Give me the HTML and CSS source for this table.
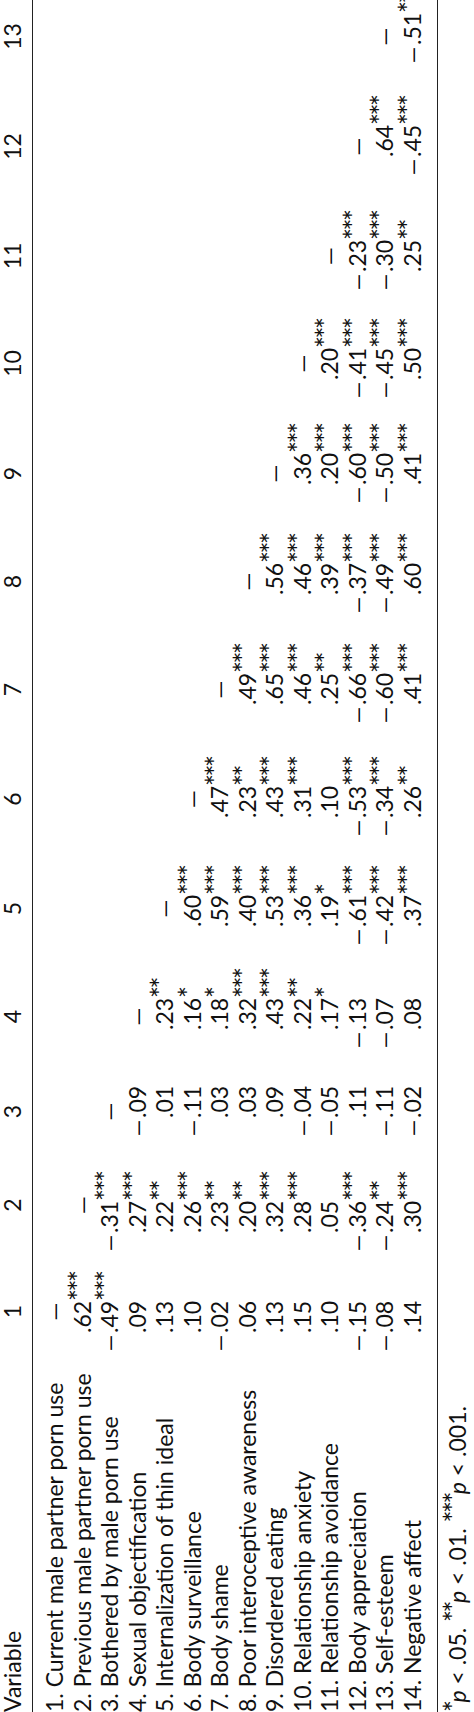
FILE: index.html
```html
<!DOCTYPE html>
<html lang="en">
<head>
<meta charset="utf-8">
<title>Correlations</title>
<link rel="stylesheet" href="styles.css">
</head>
<body>
<div class="page">
  <div class="sheet">
    <div class="row head">
      <div class="lab">Variable</div>
      <div class="hd k1">1</div>
      <div class="hd k2">2</div>
      <div class="hd k3">3</div>
      <div class="hd k4">4</div>
      <div class="hd k5">5</div>
      <div class="hd k6">6</div>
      <div class="hd k7">7</div>
      <div class="hd k8">8</div>
      <div class="hd k9">9</div>
      <div class="hd k10">10</div>
      <div class="hd k11">11</div>
      <div class="hd k12">12</div>
      <div class="hd k13">13</div>
    </div>
    <div class="body">
      <div class="row">
        <div class="lab">1. Current male partner porn use</div>
        <div class="dash k1">—</div>
      </div>
      <div class="row">
        <div class="lab">2. Previous male partner porn use</div>
        <div class="v">.62<sup>***</sup></div>
        <div class="dash k2">—</div>
      </div>
      <div class="row">
        <div class="lab">3. Bothered by male porn use</div>
        <div class="v"><span class="m">–</span>.49<sup>***</sup></div>
        <div class="v"><span class="m">–</span>.31<sup>***</sup></div>
        <div class="dash k3">—</div>
      </div>
      <div class="row">
        <div class="lab">4. Sexual objectification</div>
        <div class="v">.09</div>
        <div class="v">.27<sup>***</sup></div>
        <div class="v"><span class="m">–</span>.09</div>
        <div class="dash k4">—</div>
      </div>
      <div class="row">
        <div class="lab">5. Internalization of thin ideal</div>
        <div class="v">.13</div>
        <div class="v">.22<sup>**</sup></div>
        <div class="v">.01</div>
        <div class="v">.23<sup>**</sup></div>
        <div class="dash k5">—</div>
      </div>
      <div class="row">
        <div class="lab">6. Body surveillance</div>
        <div class="v">.10</div>
        <div class="v">.26<sup>***</sup></div>
        <div class="v"><span class="m">–</span>.11</div>
        <div class="v">.16<sup>*</sup></div>
        <div class="v">.60<sup>***</sup></div>
        <div class="dash k6">—</div>
      </div>
      <div class="row">
        <div class="lab">7. Body shame</div>
        <div class="v"><span class="m">–</span>.02</div>
        <div class="v">.23<sup>**</sup></div>
        <div class="v">.03</div>
        <div class="v">.18<sup>*</sup></div>
        <div class="v">.59<sup>***</sup></div>
        <div class="v">.47<sup>***</sup></div>
        <div class="dash k7">—</div>
      </div>
      <div class="row">
        <div class="lab">8. Poor interoceptive awareness</div>
        <div class="v">.06</div>
        <div class="v">.20<sup>**</sup></div>
        <div class="v">.03</div>
        <div class="v">.32<sup>***</sup></div>
        <div class="v">.40<sup>***</sup></div>
        <div class="v">.23<sup>**</sup></div>
        <div class="v">.49<sup>***</sup></div>
        <div class="dash k8">—</div>
      </div>
      <div class="row">
        <div class="lab">9. Disordered eating</div>
        <div class="v">.13</div>
        <div class="v">.32<sup>***</sup></div>
        <div class="v">.09</div>
        <div class="v">.43<sup>***</sup></div>
        <div class="v">.53<sup>***</sup></div>
        <div class="v">.43<sup>***</sup></div>
        <div class="v">.65<sup>***</sup></div>
        <div class="v">.56<sup>***</sup></div>
        <div class="dash k9">—</div>
      </div>
      <div class="row">
        <div class="lab">10. Relationship anxiety</div>
        <div class="v">.15</div>
        <div class="v">.28<sup>***</sup></div>
        <div class="v"><span class="m">–</span>.04</div>
        <div class="v">.22<sup>**</sup></div>
        <div class="v">.36<sup>***</sup></div>
        <div class="v">.31<sup>***</sup></div>
        <div class="v">.46<sup>***</sup></div>
        <div class="v">.46<sup>***</sup></div>
        <div class="v">.36<sup>***</sup></div>
        <div class="dash k10">—</div>
      </div>
      <div class="row">
        <div class="lab">11. Relationship avoidance</div>
        <div class="v">.10</div>
        <div class="v">.05</div>
        <div class="v"><span class="m">–</span>.05</div>
        <div class="v">.17<sup>*</sup></div>
        <div class="v">.19<sup>*</sup></div>
        <div class="v">.10</div>
        <div class="v">.25<sup>**</sup></div>
        <div class="v">.39<sup>***</sup></div>
        <div class="v">.20<sup>***</sup></div>
        <div class="v">.20<sup>***</sup></div>
        <div class="dash k11">—</div>
      </div>
      <div class="row">
        <div class="lab">12. Body appreciation</div>
        <div class="v"><span class="m">–</span>.15</div>
        <div class="v"><span class="m">–</span>.36<sup>***</sup></div>
        <div class="v">.11</div>
        <div class="v"><span class="m">–</span>.13</div>
        <div class="v"><span class="m">–</span>.61<sup>***</sup></div>
        <div class="v"><span class="m">–</span>.53<sup>***</sup></div>
        <div class="v"><span class="m">–</span>.66<sup>***</sup></div>
        <div class="v"><span class="m">–</span>.37<sup>***</sup></div>
        <div class="v"><span class="m">–</span>.60<sup>***</sup></div>
        <div class="v"><span class="m">–</span>.41<sup>***</sup></div>
        <div class="v"><span class="m">–</span>.23<sup>***</sup></div>
        <div class="dash k12">—</div>
      </div>
      <div class="row">
        <div class="lab">13. Self-esteem</div>
        <div class="v"><span class="m">–</span>.08</div>
        <div class="v"><span class="m">–</span>.24<sup>**</sup></div>
        <div class="v"><span class="m">–</span>.11</div>
        <div class="v"><span class="m">–</span>.07</div>
        <div class="v"><span class="m">–</span>.42<sup>***</sup></div>
        <div class="v"><span class="m">–</span>.34<sup>***</sup></div>
        <div class="v"><span class="m">–</span>.60<sup>***</sup></div>
        <div class="v"><span class="m">–</span>.49<sup>***</sup></div>
        <div class="v"><span class="m">–</span>.50<sup>***</sup></div>
        <div class="v"><span class="m">–</span>.45<sup>***</sup></div>
        <div class="v"><span class="m">–</span>.30<sup>***</sup></div>
        <div class="v">.64<sup>***</sup></div>
        <div class="dash k13">—</div>
      </div>
      <div class="row">
        <div class="lab">14. Negative affect</div>
        <div class="v">.14</div>
        <div class="v">.30<sup>***</sup></div>
        <div class="v"><span class="m">–</span>.02</div>
        <div class="v">.08</div>
        <div class="v">.37<sup>***</sup></div>
        <div class="v">.26<sup>**</sup></div>
        <div class="v">.41<sup>***</sup></div>
        <div class="v">.60<sup>***</sup></div>
        <div class="v">.41<sup>***</sup></div>
        <div class="v">.50<sup>***</sup></div>
        <div class="v">.25<sup>**</sup></div>
        <div class="v"><span class="m">–</span>.45<sup>***</sup></div>
        <div class="v"><span class="m">–</span>.51<sup>***</sup></div>
      </div>
    </div>
    <p class="note"><sup>*</sup><i>p</i> &lt; .05. <sup>**</sup><i>p</i> &lt; .01. <sup>***</sup><i>p</i> &lt; .001.</p>
  </div>
</div>
</body>
</html>
```

FILE: styles.css
```css
html, body {
  margin: 0;
  padding: 0;
  background: #ffffff;
}

.page {
  width: 474px;
  height: 1712px;
  overflow: hidden;
}

.sheet {
  width: 1712px;
  height: 474px;
  transform-origin: 0 0;
  transform: rotate(-90deg) translateX(-100%);
  font-family: Lato, "Open Sans", sans-serif;
  font-size: 23px;
  color: #111111;
}

.row {
  display: grid;
  grid-template-columns: 365px 100px 115px 88px 103px 109px 113px 110px 110px 105px 108px 115px 112px 59px;
  height: 27.5px;
  line-height: 27.5px;
  white-space: nowrap;
}

.row.head {
  height: 24px;
  line-height: 24px;
  padding-bottom: 8px;
  border-bottom: 1.5px solid #222222;
}

.body {
  padding-top: 8.35px;
  padding-bottom: 11.15px;
  border-bottom: 1.5px solid #222222;
}

.v {
  padding-left: 14px;
}

.m {
  display: inline-block;
  width: 15px;
  margin-left: -15px;
  text-align: right;
  transform: scaleX(1.5);
  transform-origin: right center;
}

sup {
  font-size: 28px;
  line-height: 0;
  vertical-align: 1px;
  letter-spacing: -2.5px;
}

.hd,
.dash {
  width: calc(var(--o) * 2);
  text-align: center;
}

.k1 { --o: 35.5px; }
.k2 { --o: 42px; }
.k3 { --o: 20.5px; }
.k4 { --o: 27.5px; }
.k5 { --o: 32.5px; }
.k6 { --o: 33px; }
.k7 { --o: 29.5px; }
.k8 { --o: 27.5px; }
.k9 { --o: 25.5px; }
.k10 { --o: 30.5px; }
.k11 { --o: 30px; }
.k12 { --o: 24.5px; }
.k13 { --o: 22.5px; }

.note {
  margin: 5.85px 0 0;
  line-height: 27.5px;
  white-space: nowrap;
}
```
